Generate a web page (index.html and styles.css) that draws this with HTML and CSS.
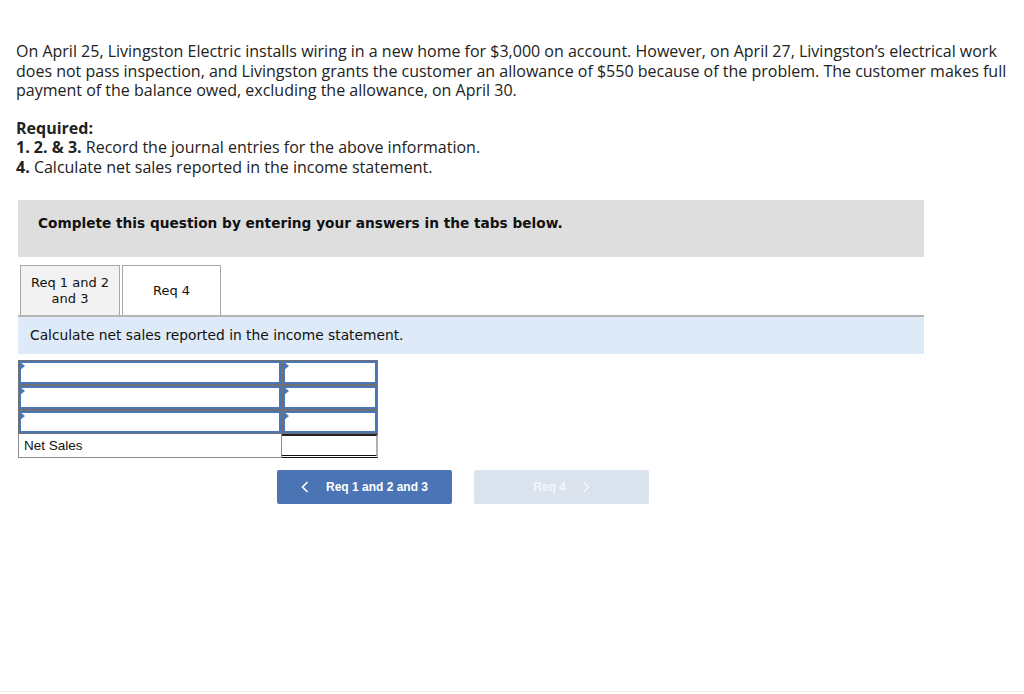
FILE: index.html
```html
<!DOCTYPE html>
<html>
<head>
<meta charset="utf-8">
<link rel="stylesheet" href="styles.css">
</head>
<body>
<div class="page">
  <p class="intro">On April 25, Livingston Electric installs wiring in a new home for $3,000 on account. However, on April 27, Livingston’s electrical work does not pass inspection, and Livingston grants the customer an allowance of $550 because of the problem. The customer makes full payment of the balance owed, excluding the allowance, on April 30.</p>
  <div class="required">
    <div class="req-title">Required:</div>
    <div><b>1. 2. &amp; 3.</b> Record the journal entries for the above information.</div>
    <div><b>4.</b> Calculate net sales reported in the income statement.</div>
  </div>
  <div class="widget">
    <div class="banner">Complete this question by entering your answers in the tabs below.</div>
    <div class="tabs">
      <div class="tab">Req 1 and 2<br>and 3</div>
      <div class="tab active">Req 4</div>
    </div>
    <div class="instruction">Calculate net sales reported in the income statement.</div>
    <div class="grid">
      <div class="cell input label h25"><span class="mark"></span></div>
      <div class="cell input val h25"><span class="mark"></span></div>
      <div class="cell input label h25"><span class="mark"></span></div>
      <div class="cell input val h25"><span class="mark"></span></div>
      <div class="cell input label h24"><span class="mark"></span></div>
      <div class="cell input val h24"><span class="mark"></span></div>
      <div class="cell total-label">Net Sales</div>
      <div class="cell total-val"></div>
    </div>
    <div class="nav">
      <button class="btn prev"><svg class="chev left" width="8" height="12" viewBox="0 0 8 12"><path d="M6.5 1 L1.5 6 L6.5 11" fill="none" stroke="currentColor" stroke-width="1.6"/></svg>Req 1 and 2 and 3</button>
      <button class="btn next">Req 4<svg class="chev right" width="8" height="12" viewBox="0 0 8 12"><path d="M1.5 1 L6.5 6 L1.5 11" fill="none" stroke="currentColor" stroke-width="1.6"/></svg></button>
    </div>
  </div>
</div>
<div class="footer-line"></div>
</body>
</html>
```
FILE: styles.css
```css
html, body {
  margin: 0;
  padding: 0;
  background: #fff;
}
body {
  height: 694px;
  position: relative;
  overflow: hidden;
}
.page {
  padding: 42px 10px 0 16px;
  font-family: "Open Sans", "Liberation Sans", sans-serif;
  color: #222;
}
.intro {
  margin: 0;
  font-size: 16px;
  line-height: 19.5px;
}
.required {
  margin-top: 18px;
  font-size: 16px;
  line-height: 19.5px;
}
.req-title {
  font-weight: bold;
}
.widget {
  margin-top: 23px;
  width: 906px;
  margin-left: 2px;
  font-family: "DejaVu Sans", Verdana, sans-serif;
}
.banner {
  background: #dedede;
  height: 57px;
  box-sizing: border-box;
  padding: 15px 0 0 20px;
  font-weight: bold;
  font-size: 13.7px;
  color: #111;
}
.tabs {
  display: flex;
  gap: 2px;
  margin-top: 8px;
  padding-left: 2px;
  border-bottom: 2px solid #b5b5b5;
}
.tab {
  width: 100px;
  height: 50px;
  box-sizing: border-box;
  border: 1px solid #a8a8a8;
  border-bottom: none;
  background: #f2f2f2;
  font-size: 13px;
  color: #111;
  text-align: center;
  display: flex;
  align-items: center;
  justify-content: center;
  line-height: 16px;
}
.tab.active {
  background: #fff;
  width: 99px;
}
.instruction {
  background: #deeaf7;
  height: 37px;
  box-sizing: border-box;
  padding: 10px 0 0 12px;
  font-size: 13.8px;
  color: #111;
}
.grid {
  margin-top: 6px;
  display: grid;
  grid-template-columns: 264px 96px;
  width: 360px;
  font-family: "Liberation Sans", Arial, sans-serif;
  font-size: 13.5px;
  color: #111;
}
.cell {
  position: relative;
  box-sizing: border-box;
}
.h25 { height: 25px; }
.h24 { height: 24px; }
.input {
  border: 1px solid #707070;
  box-shadow: inset 0 0 0 2px #4a76b8;
  background: #fff;
}
.mark {
  position: absolute;
  left: 1px;
  top: 1px;
  width: 0;
  height: 0;
  border-top: 4px solid transparent;
  border-bottom: 4px solid transparent;
  border-left: 5px solid #4a76b8;
}
.total-label {
  height: 24px;
  border: 1px solid #8a8a8a;
  border-top: none;
  padding: 4px 0 0 5px;
}
.total-val {
  height: 24px;
  border-right: 2px solid #b0b0b0;
  border-top: 2px solid #222;
  border-bottom: 3px double #111;
}
.nav {
  display: flex;
  gap: 22px;
  margin-top: 12px;
  padding-left: 259px;
}
.btn {
  width: 175px;
  height: 34px;
  border: none;
  border-radius: 2px;
  font-family: "Liberation Sans", Arial, sans-serif;
  font-weight: bold;
  font-size: 12px;
  display: flex;
  align-items: center;
  justify-content: center;
  padding: 0;
}
.btn.prev {
  background: #4a74b4;
  color: #fff;
}
.btn.next {
  background: #dbe3ef;
  color: #f4f6fa;
}
.chev.left { margin-right: 17px; }
.chev.right { margin-left: 16px; }
.footer-line {
  position: absolute;
  left: 0;
  right: 0;
  top: 691px;
  height: 1px;
  background: #ececec;
}
```
